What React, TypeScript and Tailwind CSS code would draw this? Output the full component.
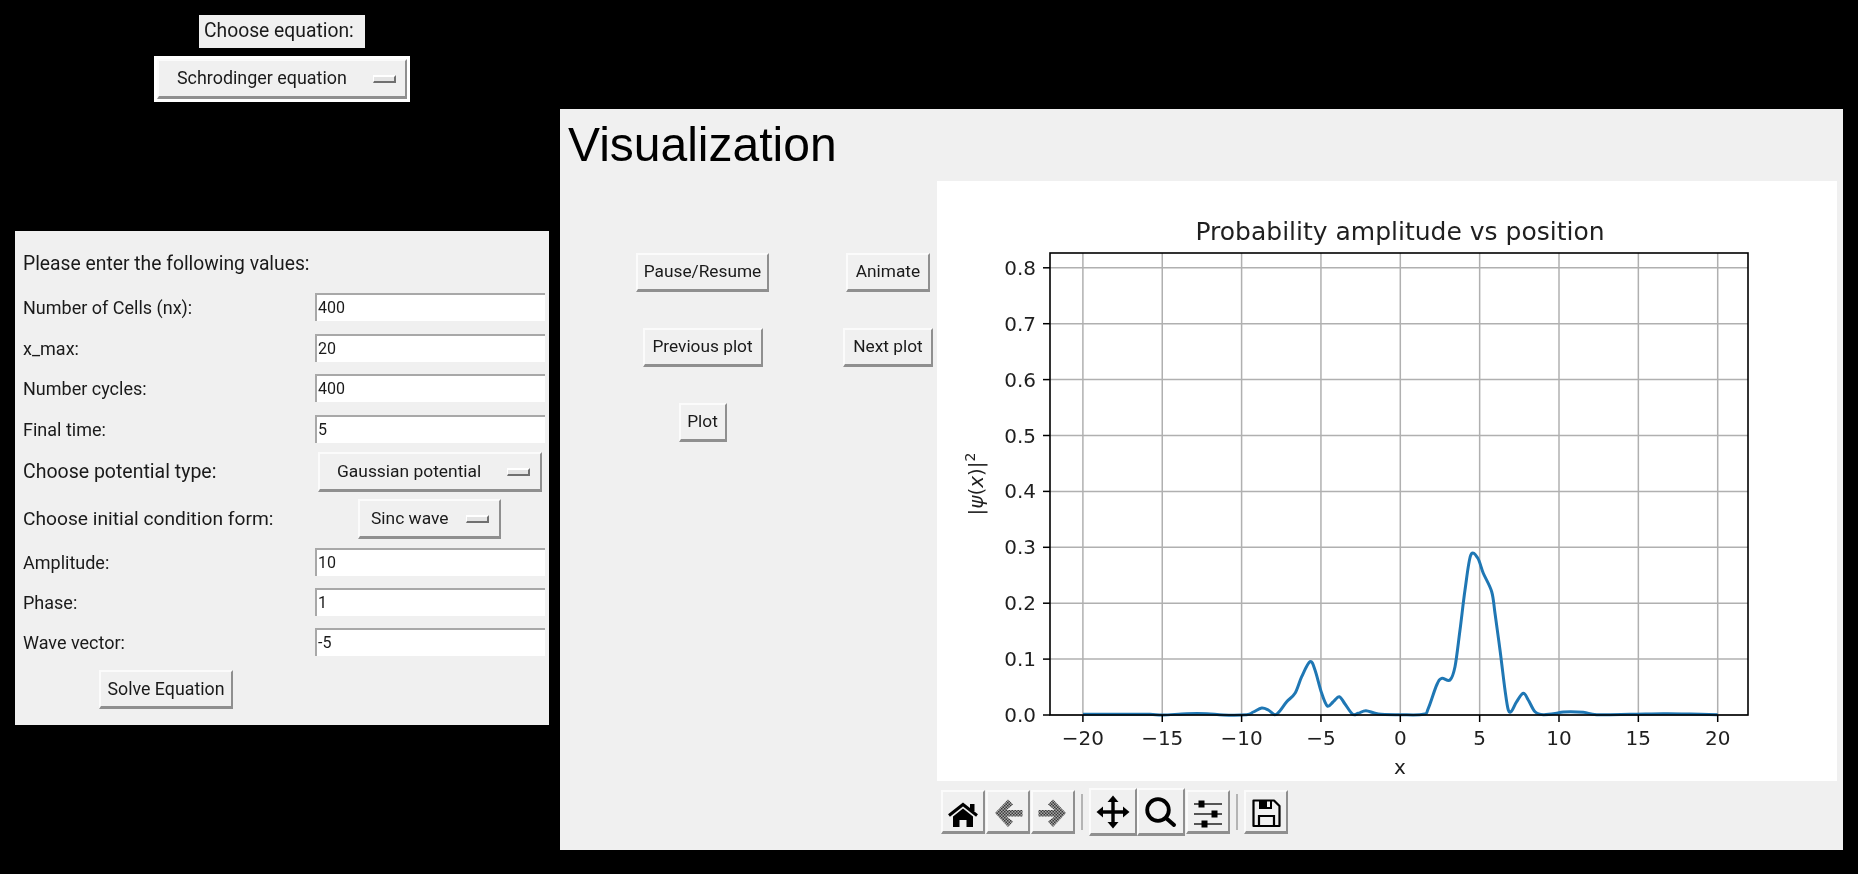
import type { ReactNode } from "react";

const bevel =
  "flex items-center bg-[#f0f0f0] border-t-2 border-l-2 border-r-2 border-b-[3px] border-t-[#fbfbfb] border-l-[#fbfbfb] border-r-[#8f8f8f] border-b-[#8f8f8f] text-[#1a1a1a]";

function TkButton({ className, children }: { className: string; children: ReactNode }) {
  return <div className={`${bevel} justify-center ${className}`}>{children}</div>;
}

function OptionMenu({ label, className }: { label: string; className: string }) {
  return (
    <div className={`${bevel} justify-between ${className}`}>
      <span>{label}</span>
      <span className="block h-[8px] w-[23px] border-t-2 border-l border-r-2 border-b-2 border-t-white border-l-white border-r-[#707070] border-b-[#707070] bg-[#e4e4e4]" />
    </div>
  );
}

function Entry({ value }: { value: string }) {
  return (
    <div className="flex h-[28px] w-[230px] items-center border-t-2 border-l-2 border-t-[#a8a8a8] border-l-[#a8a8a8] bg-white pl-px text-[16px] text-[#1a1a1a]">
      {value}
    </div>
  );
}

function Row({ label, className, children }: { label: string; className: string; children: ReactNode }) {
  return (
    <div className={`flex items-center ${className}`}>
      <span className="w-[292px] shrink-0">{label}</span>
      {children}
    </div>
  );
}

// curve traced from the plot, in page pixels relative to the canvas
const tracePoints: [number, number][] = [
  [-141, 703], [0, 703], [60, 703], [100, 705], [170, 701], [230, 701], [280, 705], [350, 704],
  [370, 696], [395, 684], [415, 690], [435, 704], [450, 692], [470, 665], [495, 640], [515, 590], [540, 545], [555, 570],
  [575, 640], [592, 678], [610, 665], [628, 650], [645, 672], [668, 703], [685, 700], [708, 692], [745, 702], [810, 704],
  [880, 703], [895, 685], [920, 615], [935, 595], [960, 600], [975, 560], [990, 450], [1005, 330], [1022, 226], [1043, 234],
  [1060, 280], [1085, 335], [1095, 400], [1110, 510], [1125, 630], [1135, 690], [1145, 693], [1160, 665], [1180, 640],
  [1195, 660], [1215, 695], [1240, 704], [1280, 700], [1300, 696], [1360, 697], [1400, 704], [1500, 703], [1600, 701],
  [1680, 702], [1763, 704],
];

function curvePath() {
  const pts = tracePoints.map(([x, y]) => [193 + x / 3, 299 + y / 3]);
  let d = `M${pts[0][0]} ${pts[0][1]}`;
  for (let i = 0; i < pts.length - 1; i++) {
    const p0 = pts[Math.max(i - 1, 0)];
    const p1 = pts[i];
    const p2 = pts[i + 1];
    const p3 = pts[Math.min(i + 2, pts.length - 1)];
    const c1x = p1[0] + (p2[0] - p0[0]) / 6;
    const c1y = p1[1] + (p2[1] - p0[1]) / 6;
    const c2x = p2[0] - (p3[0] - p1[0]) / 6;
    const c2y = p2[1] - (p3[1] - p1[1]) / 6;
    d += `C${c1x.toFixed(1)} ${c1y.toFixed(1)} ${c2x.toFixed(1)} ${c2y.toFixed(1)} ${p2[0].toFixed(1)} ${p2[1].toFixed(1)}`;
  }
  return d;
}

const xTicks = [-20, -15, -10, -5, 0, 5, 10, 15, 20];
const yTicks = ["0.0", "0.1", "0.2", "0.3", "0.4", "0.5", "0.6", "0.7", "0.8"];

function Plot() {
  const left = 113;
  const right = 811;
  const top = 72;
  const bottom = 534;
  const tx = (v: number) => 463.3 + v * 15.87;
  const ty = (i: number) => bottom - i * 55.9;

  return (
    <svg width="900" height="600" viewBox="0 0 900 600" className="block font-['DejaVu_Sans',sans-serif]">
      {xTicks.map((v) => (
        <line key={v} x1={tx(v)} x2={tx(v)} y1={top} y2={bottom} stroke="#b0b0b0" strokeWidth="1.5" />
      ))}
      {yTicks.map((_, i) => (
        <line key={i} x1={left} x2={right} y1={ty(i)} y2={ty(i)} stroke="#b0b0b0" strokeWidth="1.5" />
      ))}
      <path d={curvePath()} fill="none" stroke="#1f77b4" strokeWidth="3" strokeLinejoin="round" />
      <rect x={left} y={top} width={right - left} height={bottom - top} fill="none" stroke="#000" strokeWidth="1.6" />
      {xTicks.map((v) => (
        <g key={v}>
          <line x1={tx(v)} x2={tx(v)} y1={bottom} y2={bottom + 7} stroke="#000" strokeWidth="1.5" />
          <text x={tx(v)} y={bottom + 30} textAnchor="middle" fontSize="20" fill="#1f1f1f">
            {v < 0 ? `\u2212${-v}` : v}
          </text>
        </g>
      ))}
      {yTicks.map((label, i) => (
        <g key={label}>
          <line x1={left - 7} x2={left} y1={ty(i)} y2={ty(i)} stroke="#000" strokeWidth="1.5" />
          <text x={left - 14} y={ty(i) + 7} textAnchor="end" fontSize="20" fill="#1f1f1f">
            {label}
          </text>
        </g>
      ))}
      <text x="463" y="59" textAnchor="middle" fontSize="25" fill="#1f1f1f">
        Probability amplitude vs position
      </text>
      <text x="463" y="593" textAnchor="middle" fontSize="20" fill="#1f1f1f">
        x
      </text>
      <text transform="translate(46 303) rotate(-90)" textAnchor="middle" fontSize="20" fill="#1f1f1f">
        |<tspan fontStyle="italic">ψ</tspan>(<tspan fontStyle="italic">x</tspan>)|
        <tspan dy="-8" fontSize="14">2</tspan>
      </text>
    </svg>
  );
}

function HomeIcon() {
  return (
    <svg width="32" height="32" viewBox="0 0 32 32">
      <polyline points="2,19.5 16,8.5 30,19.5" fill="none" stroke="#000" strokeWidth="3" />
      <rect x="23" y="8" width="4.5" height="7" fill="#000" />
      <polygon points="16,12.5 26,20.5 26,31 19.5,31 19.5,24 12.5,24 12.5,31 6,31 6,20.5" fill="#000" />
    </svg>
  );
}

function ArrowIcon({ flip, id }: { flip?: boolean; id: string }) {
  return (
    <svg width="32" height="32" viewBox="0 0 32 32">
      <defs>
        <pattern id={id} width="3" height="3" patternUnits="userSpaceOnUse">
          <rect width="3" height="3" fill="#a6a6a6" />
          <rect width="1.5" height="1.5" fill="#3a3a3a" />
          <rect x="1.5" y="1.5" width="1.5" height="1.5" fill="#3a3a3a" />
        </pattern>
      </defs>
      <polygon
        points="3,17 16,3.5 21,8.5 14.5,14 30.5,14 30.5,20.5 14.5,20.5 21,25.5 16,31"
        fill={`url(#${id})`}
        transform={flip ? "translate(32 0) scale(-1 1)" : undefined}
      />
    </svg>
  );
}

function MoveIcon() {
  return (
    <svg width="36" height="36" viewBox="0 0 36 36">
      <path d="M18 6V30M6 18H30" stroke="#000" strokeWidth="3.4" />
      <polygon points="18,1.5 23.5,8 12.5,8" fill="#000" />
      <polygon points="18,34.5 23.5,28 12.5,28" fill="#000" />
      <polygon points="1.5,18 8,12.5 8,23.5" fill="#000" />
      <polygon points="34.5,18 28,12.5 28,23.5" fill="#000" />
    </svg>
  );
}

function SearchIcon() {
  return (
    <svg width="36" height="36" viewBox="0 0 36 36">
      <circle cx="15" cy="16" r="10.8" fill="none" stroke="#000" strokeWidth="3.8" />
      <line x1="23" y1="24" x2="31" y2="31" stroke="#000" strokeWidth="4" strokeLinecap="round" />
    </svg>
  );
}

function SlidersIcon() {
  return (
    <svg width="32" height="32" viewBox="0 0 32 32">
      <path d="M2 8H30M2 18H30M2 28H30" stroke="#222" strokeWidth="1.7" />
      <rect x="6.5" y="4.5" width="6" height="7" fill="#000" />
      <rect x="19.5" y="14.5" width="6" height="7" fill="#000" />
      <rect x="9.5" y="24.5" width="6" height="7" fill="#000" />
    </svg>
  );
}

function SaveIcon() {
  return (
    <svg width="32" height="32" viewBox="0 0 32 32">
      <path d="M3.5 4.5H24L29.5 10V30H3.5Z" fill="none" stroke="#000" strokeWidth="2.2" strokeLinejoin="round" />
      <path d="M9 4H22V13H9Z" fill="#000" />
      <rect x="17" y="5.5" width="3" height="5.5" fill="#f0f0f0" />
      <path d="M9 30V20H24V30" fill="none" stroke="#000" strokeWidth="2.2" />
    </svg>
  );
}

function Toolbar() {
  const tool = "h-[44px] w-[44px]";
  const active = "h-[48px] w-[48px]";
  return (
    <div className="flex h-[62px] items-center pl-[4px]">
      <TkButton className={tool}><HomeIcon /></TkButton>
      <TkButton className={`${tool} ml-px`}><ArrowIcon id="dither-back" /></TkButton>
      <TkButton className={`${tool} ml-px`}><ArrowIcon id="dither-forward" flip /></TkButton>
      <span className="mx-[6px] h-[36px] w-[2px] bg-[#b4b4b4]" />
      <TkButton className={active}><MoveIcon /></TkButton>
      <TkButton className={active}><SearchIcon /></TkButton>
      <TkButton className={`${tool} ml-px`}><SlidersIcon /></TkButton>
      <span className="mx-[6px] h-[36px] w-[2px] bg-[#b4b4b4]" />
      <TkButton className={tool}><SaveIcon /></TkButton>
    </div>
  );
}

export default function App() {
  return (
    <div className="flex h-[874px] w-[1858px] overflow-hidden bg-black pl-[15px] font-['Roboto',sans-serif] text-[18px] text-[#1a1a1a] blur-[0.4px]">
      <div className="flex w-[534px] shrink-0 flex-col items-center pt-[15px]">
        <div className="flex h-[33px] w-[166px] items-center bg-[#f0f0f0] pl-[5px] text-[19.3px]">Choose equation:</div>
        <div className="mt-[8px] border-[3px] border-white">
          <OptionMenu label="Schrodinger equation" className="h-[40px] w-[250px] pl-[18px] pr-[9px] text-[17.9px]" />
        </div>

        <div className="mt-[129px] flex h-[494px] w-[534px] flex-col bg-[#f0f0f0] pl-[8px] pt-[21px]">
          <div className="flex h-[24px] items-center text-[19.3px]">Please enter the following values:</div>
          <Row label="Number of Cells (nx):" className="mt-[17px]"><Entry value="400" /></Row>
          <Row label="x_max:" className="mt-[13px]"><Entry value="20" /></Row>
          <Row label="Number cycles:" className="mt-[12px]"><Entry value="400" /></Row>
          <Row label="Final time:" className="mt-[13px]"><Entry value="5" /></Row>
          <Row label="Choose potential type:" className="mt-[9px] text-[19.5px]">
            <OptionMenu label="Gaussian potential" className="ml-[3px] h-[40px] w-[224px] pl-[17px] pr-[10px] text-[17.4px]" />
          </Row>
          <Row label="Choose initial condition form:" className="mt-[7px] text-[19.2px]">
            <OptionMenu label="Sinc wave" className="ml-[43px] h-[40px] w-[143px] pl-[11px] pr-[10px] text-[17.4px]" />
          </Row>
          <Row label="Amplitude:" className="mt-[9px]"><Entry value="10" /></Row>
          <Row label="Phase:" className="mt-[12px]"><Entry value="1" /></Row>
          <Row label="Wave vector:" className="mt-[12px]"><Entry value="-5" /></Row>
          <TkButton className="ml-[76px] mt-[14px] h-[39px] w-[134px] text-[17.8px]">Solve Equation</TkButton>
        </div>
      </div>

      <div className="ml-[11px] mt-[109px] flex h-[741px] w-[1283px] shrink-0 flex-col bg-[#f0f0f0]">
        <div className="flex h-[72px] items-center pl-[8px] font-['Liberation_Sans',sans-serif] text-[48px] leading-none text-black">Visualization</div>
        <div className="flex">
          <div className="grid w-[377px] shrink-0 grid-cols-[279px_92px] content-start justify-items-center gap-y-[36px] pl-[3px] pt-[72px] text-[17.3px]">
            <TkButton className="h-[39px] w-[133px]">Pause/Resume</TkButton>
            <TkButton className="h-[39px] w-[84px]">Animate</TkButton>
            <TkButton className="h-[39px] w-[120px]">Previous plot</TkButton>
            <TkButton className="h-[39px] w-[90px]">Next plot</TkButton>
            <TkButton className="h-[39px] w-[48px]">Plot</TkButton>
          </div>
          <div className="w-[900px]">
            <div className="h-[600px] bg-white"><Plot /></div>
            <Toolbar />
          </div>
        </div>
      </div>
    </div>
  );
}
